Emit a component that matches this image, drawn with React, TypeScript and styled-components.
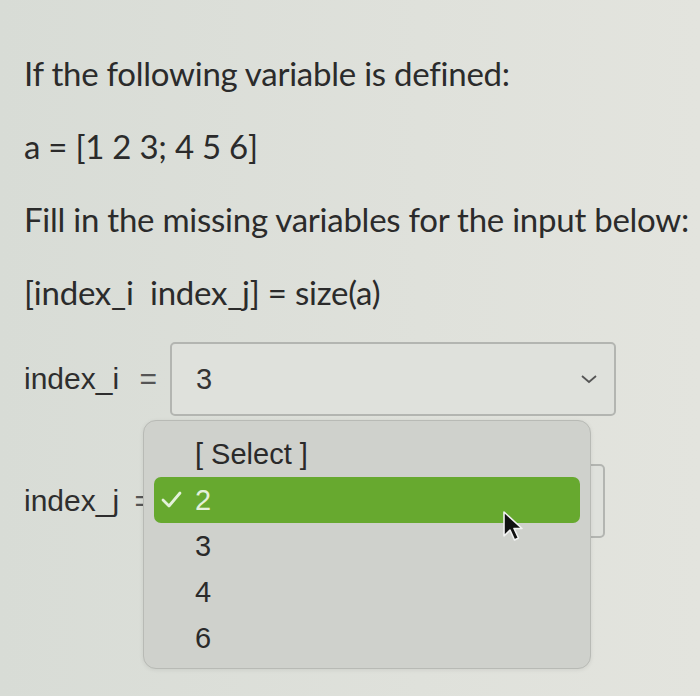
import React from 'react';
import styled, { createGlobalStyle } from 'styled-components';

const GlobalStyle = createGlobalStyle`
  html, body {
    margin: 0;
    padding: 0;
    background: #dcdfd8;
  }
  body {
    width: 700px;
    height: 696px;
    overflow: hidden;
  }
`;

const Page = styled.div`
  position: relative;
  width: 700px;
  height: 696px;
  box-sizing: border-box;
  padding: 54px 0 0 24px;
  background: linear-gradient(90deg, #d8dcd6 0%, #dfe1db 60%, #e3e4de 100%);
  color: #2b2b2b;
`;

const Para = styled.p`
  margin: 0 0 35px 0;
  font-family: Lato, 'Open Sans', sans-serif;
  font-size: 33px;
  line-height: 38px;
  letter-spacing: -0.25px;
  white-space: nowrap;
`;

const Form = styled.div`
  display: flex;
  flex-direction: column;
  gap: 48px;
  margin-top: -4px;
`;

const Row = styled.div`
  display: flex;
  align-items: center;
  height: 74px;
`;

const Label = styled.span`
  font-family: 'Liberation Sans', Arial, sans-serif;
  font-size: 30px;
  color: #2e2e2e;
  width: 146px;
  display: flex;
  justify-content: space-between;
  box-sizing: border-box;
`;

const Eq = styled.span<{ gap: number }>`
  color: #555;
  margin-right: ${({ gap }) => gap}px;
`;

const SelectBox = styled.div<{ w: number }>`
  width: ${({ w }) => w}px;
  height: 74px;
  box-sizing: border-box;
  border: 2px solid #b3b5b1;
  border-radius: 5px;
  background: #dfe1dc;
  display: flex;
  align-items: center;
  justify-content: space-between;
  padding: 0 16px 0 24px;
  font-family: 'Liberation Sans', Arial, sans-serif;
  font-size: 29px;
  color: #333;
`;

const Menu = styled.div`
  position: absolute;
  left: 143px;
  top: 420px;
  width: 448px;
  height: 249px;
  box-sizing: border-box;
  border: 1.5px solid #b8bab5;
  border-radius: 13px;
  background: #cfd1cc;
  box-shadow: 0 1px 4px rgba(0, 0, 0, 0.08);
  padding: 10px 10px 0 10px;
  display: flex;
  flex-direction: column;
`;

const Option = styled.div<{ active?: boolean }>`
  height: 46px;
  display: flex;
  align-items: center;
  border-radius: 7px;
  padding-left: ${({ active }) => (active ? '6px' : '41px')};
  background: ${({ active }) => (active ? '#67a92f' : 'transparent')};
  color: ${({ active }) => (active ? '#e4f1da' : '#2a2a2a')};
  font-family: 'Liberation Sans', Arial, sans-serif;
  font-size: 29px;
`;

const Check = styled.span`
  width: 35px;
  display: inline-flex;
  align-items: center;
`;

const Cursor = styled.svg`
  position: absolute;
  left: 502px;
  top: 510px;
`;

export default function App() {
  return (
    <>
      <GlobalStyle />
      <Page>
        <Para>If the following variable is defined:</Para>
        <Para>a = [1 2 3; 4 5 6]</Para>
        <Para>Fill in the missing variables for the input below:</Para>
        <Para>[index_i&nbsp; index_j] = size(a)</Para>
        <Form>
          <Row>
            <Label>
              <span>index_i</span>
              <Eq gap={13}>=</Eq>
            </Label>
            <SelectBox w={446}>
              <span>3</span>
              <svg width="18" height="12" viewBox="0 0 18 12">
                <path d="M2 3 L9 9 L16 3" fill="none" stroke="#555" strokeWidth="1.8" />
              </svg>
            </SelectBox>
          </Row>
          <Row>
            <Label>
              <span>index_j</span>
              <Eq gap={18}>=</Eq>
            </Label>
            <SelectBox w={435}>
              <span>2</span>
              <svg width="18" height="12" viewBox="0 0 18 12">
                <path d="M2 3 L9 9 L16 3" fill="none" stroke="#555" strokeWidth="1.8" />
              </svg>
            </SelectBox>
          </Row>
        </Form>
        <Menu>
          <Option>[ Select ]</Option>
          <Option active>
            <Check>
              <svg width="24" height="20" viewBox="0 0 24 20">
                <path d="M3 10 L9 16 L20 3" fill="none" stroke="#e4f1da" strokeWidth="2.8" strokeLinecap="round" strokeLinejoin="round" />
              </svg>
            </Check>
            2
          </Option>
          <Option>3</Option>
          <Option>4</Option>
          <Option>6</Option>
        </Menu>
        <Cursor width="26" height="34" viewBox="0 0 26 34">
          <path d="M2 2 L2 26 L8 20 L12.5 30 L16.5 28 L12 18.5 L20 18.5 Z" fill="#111" stroke="#f2f2f2" strokeWidth="1.6" strokeLinejoin="round" />
        </Cursor>
      </Page>
    </>
  );
}
